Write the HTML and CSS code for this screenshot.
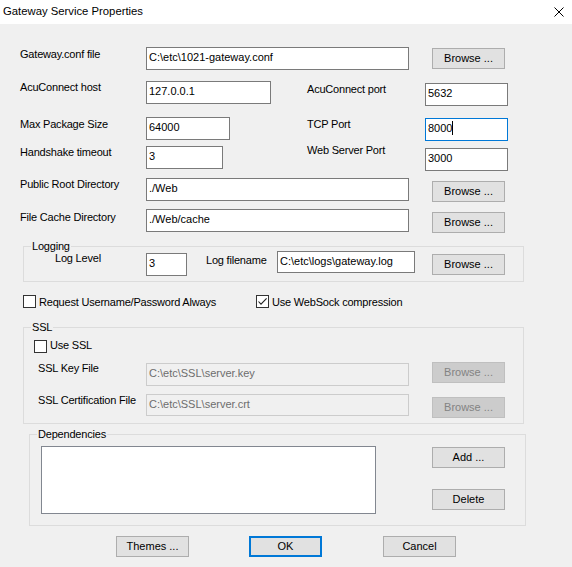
FILE: index.html
```html
<!DOCTYPE html>
<html>
<head>
<meta charset="utf-8">
<title>Gateway Service Properties</title>
<link rel="stylesheet" href="styles.css">
</head>
<body>
<div class="titlebar">
  <span class="title">Gateway Service Properties</span>
  <svg class="close" width="10" height="10" viewBox="0 0 10 10"><path d="M0.5 0.5L9.5 9.5M9.5 0.5L0.5 9.5" stroke="#000" stroke-width="1" fill="none"/></svg>
</div>
<div class="content">
  <div class="row r1">
    <span class="lbl col1 mt2">Gateway.conf file</span>
    <div class="tb w-long mt1">C:\etc\1021-gateway.conf</div>
    <button class="btn ml23 mt2">Browse ...</button>
  </div>

  <div class="row r2">
    <span class="lbl col1">AcuConnect host</span>
    <div class="tb w-host">127.0.0.1</div>
    <span class="lbl col2 ml36 mt2">AcuConnect port</span>
    <div class="tb w-port mt2">5632</div>
  </div>

  <div class="row r3">
    <span class="lbl col1 mt1">Max Package Size</span>
    <div class="tb w-pkg">64000</div>
    <span class="lbl col2 ml77 mt1">TCP Port</span>
    <div class="tb w-port focus mt1">8000<span class="caret"></span></div>
  </div>

  <div class="row r4">
    <span class="lbl col1 mt2">Handshake timeout</span>
    <div class="tb w-hs mt2">3</div>
    <span class="lbl col2 ml84">Web Server Port</span>
    <div class="tb w-port mt4">3000</div>
  </div>

  <div class="row r5">
    <span class="lbl col1">Public Root Directory</span>
    <div class="tb w-long">./Web</div>
    <button class="btn ml23 mt3">Browse ...</button>
  </div>

  <div class="row r6">
    <span class="lbl col1 mt2">File Cache Directory</span>
    <div class="tb w-long">./Web/cache</div>
    <button class="btn ml23 mt3">Browse ...</button>
  </div>

  <div class="group g-log">
    <span class="legend">Logging</span>
    <div class="row log-row">
      <span class="lbl log-lvl mt1">Log Level</span>
      <div class="tb w-lvl mt2">3</div>
      <span class="lbl log-fn mt3">Log filename</span>
      <div class="tb w-fn short">C:\etc\logs\gateway.log</div>
      <button class="btn ml17 mt3">Browse ...</button>
    </div>
  </div>

  <div class="row r-check">
    <div class="check chk-req">
      <span class="box"></span>
      <span class="lbl">Request Username/Password Always</span>
    </div>
    <div class="check">
      <span class="box"><svg width="11" height="11" viewBox="0 0 11 11"><path d="M1.5 5.5L4 8.2L9.6 2.3" stroke="#222" stroke-width="1.1" fill="none"/></svg></span>
      <span class="lbl">Use WebSock compression</span>
    </div>
  </div>

  <div class="group g-ssl">
    <span class="legend">SSL</span>
    <div class="row ssl-use">
      <div class="check">
        <span class="box"></span>
        <span class="lbl ssl-use-lbl">Use SSL</span>
      </div>
    </div>
    <div class="row ssl-key">
      <span class="lbl ssl-lbl">SSL Key File</span>
      <div class="tb w-long off mt1">C:\etc\SSL\server.key</div>
      <button class="btn off ml23">Browse ...</button>
    </div>
    <div class="row ssl-crt">
      <span class="lbl ssl-lbl">SSL Certification File</span>
      <div class="tb w-long off short">C:\etc\SSL\server.crt</div>
      <button class="btn off ml23 mt3">Browse ...</button>
    </div>
  </div>

  <div class="group g-dep">
    <span class="legend">Dependencies</span>
    <div class="row dep-row">
      <div class="listbox"></div>
      <div class="dep-btns">
        <button class="btn">Add ...</button>
        <button class="btn btn-del">Delete</button>
      </div>
    </div>
  </div>

  <div class="row r-bottom">
    <button class="btn b-themes">Themes ...</button>
    <button class="btn default b-ok">OK</button>
    <button class="btn b-cancel">Cancel</button>
  </div>
</div>
</body>
</html>
```

FILE: styles.css
```css
* { box-sizing: border-box; }
html, body { margin: 0; padding: 0; }
body {
  width: 572px;
  height: 567px;
  overflow: hidden;
  background: #f0f0f0;
  font-family: "Liberation Sans", Arial, sans-serif;
  font-size: 11px;
  color: #000;
}

.titlebar {
  height: 24px;
  background: #fff;
  display: flex;
  align-items: flex-start;
  justify-content: space-between;
}
.title {
  font-size: 11.3px;
  line-height: 16px;
  margin: 3px 0 0 3px;
}
.close { margin: 7px 8px 0 0; display: block; }

.content { padding-left: 20px; }

.row { display: flex; align-items: flex-start; }

.lbl { flex: none; line-height: 13px; white-space: nowrap; letter-spacing: -0.2px; }
.col1 { width: 126px; }
.col2 { width: 118px; }

.tb {
  flex: none;
  height: 23px;
  border: 1px solid #7a7a7a;
  background: #fff;
  padding: 0 2px;
  line-height: 18px;
  white-space: nowrap;
  overflow: hidden;
}
.tb.short { height: 22px; }
.tb.focus { border-color: #0078d7; }
.tb.off { border-color: #cccccc; background: #f0f0f0; color: #6d6d6d; }
.caret {
  display: inline-block;
  width: 1px;
  height: 14px;
  background: #000;
  vertical-align: -3px;
}

.w-long { width: 263px; }
.w-host { width: 125px; }
.w-port { width: 83px; }
.w-pkg { width: 84px; }
.w-hs { width: 77px; }
.w-lvl { width: 41px; }
.w-fn { width: 138px; }

.btn {
  flex: none;
  width: 73px;
  height: 21px;
  border: 1px solid #adadad;
  background: #e1e1e1;
  font: inherit;
  color: #000;
  padding: 0;
  margin: 0;
  line-height: 19px;
  text-align: center;
  display: block;
}
.btn.off { background: #cccccc; border-color: #bfbfbf; color: #838383; }
.btn.default { border: 2px solid #0078d7; line-height: 17px; }

.mt1 { margin-top: 1px; }
.mt2 { margin-top: 2px; }
.mt3 { margin-top: 3px; }
.mt4 { margin-top: 4px; }
.ml17 { margin-left: 17px; }
.ml23 { margin-left: 23px; }
.ml36 { margin-left: 36px; }
.ml77 { margin-left: 77px; }
.ml84 { margin-left: 84px; }

.r1 { margin-top: 22px; }
.r2 { margin-top: 11px; }
.r3 { margin-top: 11px; }
.r4 { margin-top: 3px; }
.r5 { margin-top: 7px; }
.r6 { margin-top: 7px; }

.group {
  position: relative;
  border: 1px solid #dcdcdc;
}
.legend {
  position: absolute;
  top: -7px;
  left: 7px;
  padding: 0 1px;
  line-height: 13px;
  background: #f0f0f0;
  white-space: nowrap;
  letter-spacing: -0.2px;
}

.g-log {
  margin: 13px 0 0 3px;
  width: 501px;
  height: 36px;
  padding-top: 4px;
}
.log-lvl { margin-left: 31px; width: 91px; }
.log-fn { margin-left: 19px; width: 71px; }

.r-check { margin-top: 13px; }
.check { display: flex; align-items: flex-start; flex: none; }
.chk-req { margin-left: 3px; width: 233px; }
.box {
  flex: none;
  display: block;
  width: 13px;
  height: 13px;
  border: 1px solid #333;
  background: #fff;
}
.box svg { display: block; }
.check .lbl { margin-left: 3px; margin-top: 1px; }

.g-ssl {
  margin: 18px 0 0 3px;
  width: 501px;
  height: 97px;
  padding-top: 11px;
}
.ssl-use .check { margin-left: 10px; margin-top: 1px; }
.check .ssl-use-lbl { margin-top: -1px; }
.ssl-key { margin-top: 9px; }
.ssl-crt { margin-top: 8px; }
.ssl-lbl { margin-left: 14px; width: 108px; }

.g-dep {
  margin: 10px 0 0 9px;
  width: 497px;
  height: 92px;
}
.listbox {
  flex: none;
  margin: 11px 0 0 11px;
  width: 335px;
  height: 68px;
  border: 1px solid #828790;
  background: #fff;
}
.dep-btns {
  flex: none;
  margin: 12px 0 0 56px;
  display: flex;
  flex-direction: column;
}
.btn-del { margin-top: 21px; }

.r-bottom { margin-top: 10px; }
.b-themes { margin-left: 96px; }
.b-ok { margin-left: 60px; }
.b-cancel { margin-left: 61px; }
```
